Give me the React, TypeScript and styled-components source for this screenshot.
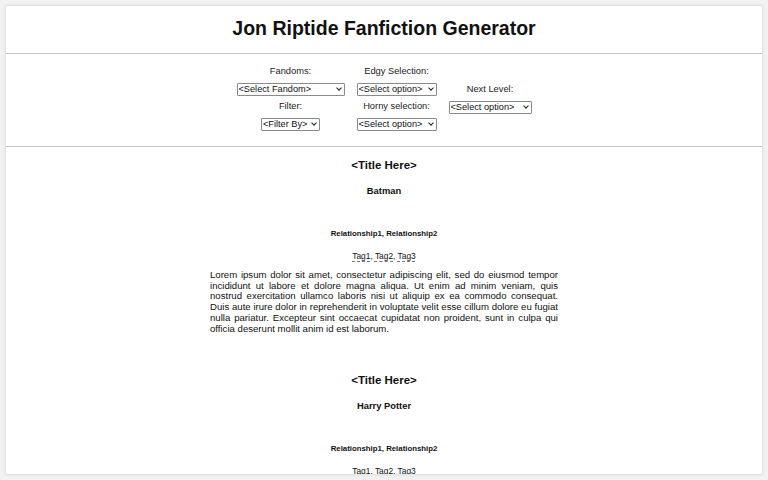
import React from 'react';
import styled, { createGlobalStyle } from 'styled-components';

const GlobalStyle = createGlobalStyle`
  html, body {
    margin: 0;
    padding: 0;
    background: #f2f2f2;
    font-family: "Liberation Sans", Arial, sans-serif;
    color: #111;
  }
`;

const Page = styled.div`
  padding: 5px;
`;

const Card = styled.div`
  height: 470px;
  overflow: hidden;
  background: #fff;
  border: 1px solid #e4e4e4;
  box-shadow: 0 0 3px rgba(0, 0, 0, 0.08);
  box-sizing: border-box;
`;

const Header = styled.header`
  padding: 11px 0 14px;
  border-bottom: 1px solid #c4c4c4;
  text-align: center;
`;

const Title = styled.h1`
  margin: 0;
  font-size: 19.5px;
  line-height: 22px;
  font-weight: bold;
`;

const Controls = styled.div`
  display: flex;
  justify-content: center;
  align-items: center;
  gap: 12px;
  padding: 12px 0 15px;
  border-bottom: 1px solid #c4c4c4;
`;

const Column = styled.div`
  display: flex;
  flex-direction: column;
  align-items: center;
`;

const Label = styled.label`
  font-size: 9.3px;
  line-height: 11px;
  color: #222;
  margin-bottom: 6px;
`;

// native arrow is replaced by a small chevron drawn on the wrapper
const SelectWrap = styled.span<{ $width: number }>`
  position: relative;
  display: block;
  width: ${(p) => p.$width}px;
  height: 13px;
  margin-bottom: 5px;
  &:last-child {
    margin-bottom: 0;
  }
  &::after {
    content: '';
    position: absolute;
    right: 4px;
    top: 3px;
    width: 3px;
    height: 3px;
    border-right: 1.3px solid #222;
    border-bottom: 1.3px solid #222;
    transform: rotate(45deg);
    pointer-events: none;
  }
`;

const Select = styled.select`
  appearance: none;
  display: block;
  width: 100%;
  height: 13px;
  box-sizing: border-box;
  padding: 0 0 0 1px;
  font-family: "Liberation Sans", Arial, sans-serif;
  font-size: 9.2px;
  line-height: 11px;
  color: #111;
  background: #fff;
  border: 1px solid #8a8a8a;
  border-radius: 1px;
  outline: none;
`;

const Feed = styled.main`
  padding-top: 12px;
`;

const Story = styled.article`
  display: flex;
  flex-direction: column;
  align-items: center;
  text-align: center;
  margin-bottom: 40px;
`;

const StoryTitle = styled.h2`
  margin: 0;
  font-size: 11.5px;
  line-height: 13px;
  font-weight: bold;
`;

const Fandom = styled.h4`
  margin: 13px 0 0;
  font-size: 9.4px;
  line-height: 11px;
  font-weight: bold;
`;

const Relationships = styled.h5`
  margin: 33px 0 0;
  font-size: 7.8px;
  line-height: 9px;
  font-weight: bold;
`;

const Tags = styled.div`
  margin-top: 13px;
  font-size: 8.4px;
  line-height: 10px;
`;

const Tag = styled.span`
  text-decoration: underline dashed #777;
  text-underline-offset: 2px;
`;

const Body = styled.p`
  width: 348px;
  margin: 9px 0 0;
  font-size: 9.6px;
  line-height: 10.7px;
  text-align: justify;
`;

const lorem =
  'Lorem ipsum dolor sit amet, consectetur adipiscing elit, sed do eiusmod tempor incididunt ut labore et dolore magna aliqua. Ut enim ad minim veniam, quis nostrud exercitation ullamco laboris nisi ut aliquip ex ea commodo consequat. Duis aute irure dolor in reprehenderit in voluptate velit esse cillum dolore eu fugiat nulla pariatur. Excepteur sint occaecat cupidatat non proident, sunt in culpa qui officia deserunt mollit anim id est laborum.';

const stories = [
  { fandom: 'Batman', tags: ['Tag1', 'Tag2', 'Tag3'] },
  { fandom: 'Harry Potter', tags: ['Tag1', 'Tag2', 'Tag3'] },
];

const Dropdown: React.FC<{ width: number; placeholder: string }> = ({ width, placeholder }) => (
  <SelectWrap $width={width}>
    <Select>
      <option>{placeholder}</option>
    </Select>
  </SelectWrap>
);

const App: React.FC = () => {
  return (
    <Page>
      <GlobalStyle />
      <Card>
        <Header>
          <Title>Jon Riptide Fanfiction Generator</Title>
        </Header>
        <Controls>
          <Column>
            <Label>Fandoms:</Label>
            <Dropdown width={108} placeholder="<Select Fandom>" />
            <Label>Filter:</Label>
            <Dropdown width={59} placeholder="<Filter By>" />
          </Column>
          <Column>
            <Label>Edgy Selection:</Label>
            <Dropdown width={80} placeholder="<Select option>" />
            <Label>Horny selection:</Label>
            <Dropdown width={80} placeholder="<Select option>" />
          </Column>
          <Column>
            <Label>Next Level:</Label>
            <Dropdown width={83} placeholder="<Select option>" />
          </Column>
        </Controls>
        <Feed>
          {stories.map((s, i) => (
            <Story key={i}>
              <StoryTitle>&lt;Title Here&gt;</StoryTitle>
              <Fandom>{s.fandom}</Fandom>
              <Relationships>Relationship1, Relationship2</Relationships>
              <Tags>
                {s.tags.map((t, j) => (
                  <React.Fragment key={t}>
                    {j > 0 && ', '}
                    <Tag>{t}</Tag>
                  </React.Fragment>
                ))}
              </Tags>
              <Body>{lorem}</Body>
            </Story>
          ))}
        </Feed>
      </Card>
    </Page>
  );
};

export default App;
